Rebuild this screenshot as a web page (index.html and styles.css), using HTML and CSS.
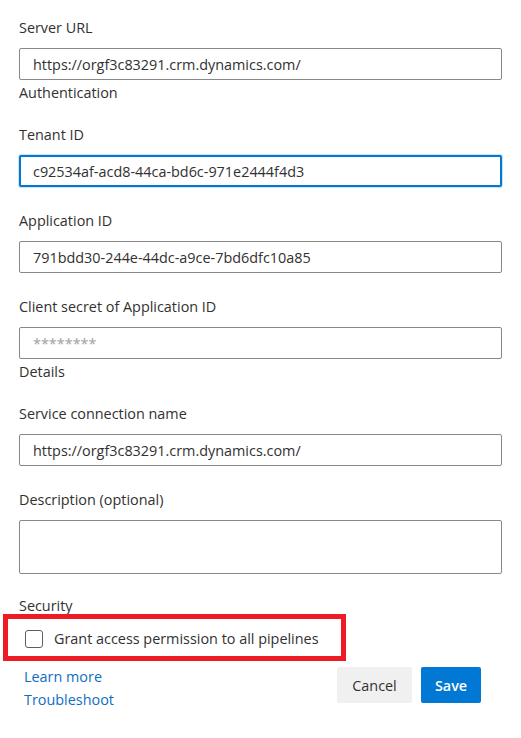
FILE: index.html
```html
<!DOCTYPE html>
<html lang="en">
<head>
    <meta charset="UTF-8">
    <meta name="viewport" content="width=device-width, initial-scale=1.0">
    <title>Service connection</title>
    <link rel="stylesheet" href="styles.css">
</head>
<body>
    <div class="panel">
        <div class="field first">
            <label>Server URL</label>
            <input type="text" value="https://orgf3c83291.crm.dynamics.com/">
        </div>

        <div class="section">Authentication</div>

        <div class="field after-section">
            <label>Tenant ID</label>
            <input type="text" class="focused" value="c92534af-acd8-44ca-bd6c-971e2444f4d3">
        </div>
        <div class="field">
            <label>Application ID</label>
            <input type="text" value="791bdd30-244e-44dc-a9ce-7bd6dfc10a85">
        </div>
        <div class="field">
            <label>Client secret of Application ID</label>
            <input type="password" placeholder="********">
        </div>

        <div class="section">Details</div>

        <div class="field after-section">
            <label>Service connection name</label>
            <input type="text" value="https://orgf3c83291.crm.dynamics.com/">
        </div>
        <div class="field">
            <label>Description (optional)</label>
            <textarea></textarea>
        </div>

        <div class="section security">Security</div>

        <div class="highlight">
            <span class="checkbox"></span>
            <span class="check-label">Grant access permission to all pipelines</span>
        </div>

        <div class="footer">
            <div class="links">
                <a href="#">Learn more</a>
                <a href="#">Troubleshoot</a>
            </div>
            <div class="buttons">
                <button class="cancel-btn">Cancel</button>
                <button class="save-btn">Save</button>
            </div>
        </div>
    </div>
</body>
</html>
```

FILE: styles.css
```css
* {
    box-sizing: border-box;
    font-family: 'Open Sans', 'Noto Sans', sans-serif;
}

body {
    margin: 0;
    background-color: #ffffff;
    color: #323130;
    font-size: 14.4px;
}

.panel {
    padding: 18px 19px 0 19px;
}

.field {
    margin-top: 24px;
}

.field.first {
    margin-top: 0;
}

.field.after-section {
    margin-top: 22px;
}

label {
    display: block;
    line-height: 20px;
    margin-bottom: 10px;
}

.section {
    line-height: 20px;
    margin-top: 3px;
}

.section.security {
    margin-top: 22px;
}

input,
textarea {
    display: block;
    width: 100%;
    height: 32px;
    margin: 0;
    padding: 0 13px;
    border: 1px solid #8a8886;
    border-radius: 2px;
    font-size: 14.4px;
    color: #323130;
    background-color: #ffffff;
    outline: none;
}

input::placeholder {
    color: #a19f9d;
}

input.focused {
    border: 2px solid #0078d4;
    padding: 0 12px;
    box-shadow: 0 0 0 1px rgba(0, 120, 212, 0.2);
}

textarea {
    height: 54px;
    resize: none;
}

.highlight {
    position: relative;
    display: flex;
    align-items: center;
    gap: 11px;
    width: 343px;
    height: 47px;
    margin: -2px 0 0 -16px;
    padding: 2px 0 0 17px;
    border: 5px solid #ed1c24;
}

.checkbox {
    width: 18px;
    height: 18px;
    border: 1px solid #605e5c;
    border-radius: 3px;
}

.check-label {
    line-height: 20px;
}

.footer {
    display: flex;
    justify-content: space-between;
    padding: 6px 21px 0 5px;
}

.links {
    display: flex;
    flex-direction: column;
    gap: 3px;
}

.links a {
    color: #106ebe;
    text-decoration: none;
    line-height: 20px;
}

.buttons {
    display: flex;
    gap: 9px;
}

button {
    height: 36px;
    padding: 0;
    border: none;
    border-radius: 2px;
    font-size: 14.4px;
    cursor: pointer;
}

.cancel-btn {
    width: 75px;
    background: #f0f0f0;
    color: #323130;
}

.save-btn {
    width: 60px;
    background: #0078d4;
    color: #ffffff;
    font-weight: 600;
}
```
